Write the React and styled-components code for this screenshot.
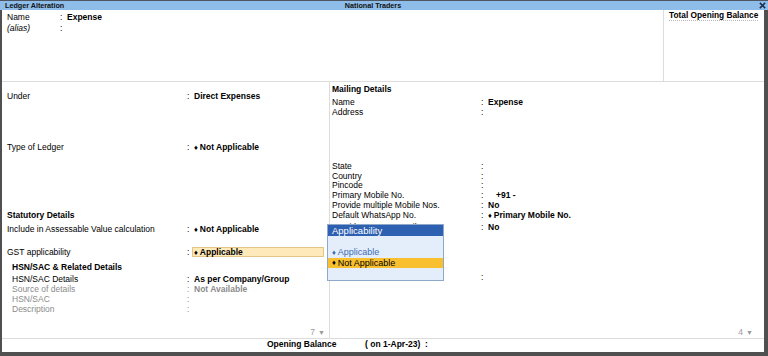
import React from 'react';
import styled, { createGlobalStyle } from 'styled-components';

const GlobalStyle = createGlobalStyle`
  html, body {
    margin: 0;
    padding: 0;
    background: #fff;
    overflow: hidden;
  }
  body {
    font-family: "Liberation Sans", Arial, sans-serif;
    font-size: 8.5px;
    color: #000;
  }
  * { box-sizing: border-box; }
`;

const Screen = styled.div`
  position: relative;
  width: 768px;
  height: 356px;
  display: flex;
  flex-direction: column;
`;

const TitleBar = styled.div`
  height: 10px;
  background: #8dbde8;
  border-top: 1px solid #4d5560;
  display: grid;
  grid-template-columns: 1fr auto 1fr;
  align-items: center;
  padding: 0 2px 0 5px;
  font-size: 7.2px;
  font-weight: bold;
  line-height: 9px;
  color: #111;
`;

const TitleCenter = styled.span`
  margin-right: 25px;
`;

const CloseIcon = styled.svg`
  justify-self: end;
  width: 7px;
  height: 7px;
`;

const Frame = styled.div`
  flex: 1;
  display: flex;
  flex-direction: column;
  border-left: 2px solid #505050;
  border-right: 4px solid #505050;
  border-bottom: 4px solid #505050;
`;

const TopSection = styled.div`
  height: 72px;
  display: flex;
  border-bottom: 1px solid #dcdcdc;
`;

const NameBlock = styled.div`
  flex: 1;
  padding: 2px 0 0 5px;
`;

const BalanceBox = styled.div`
  width: 101px;
  border-left: 1px solid #dcdcdc;
  padding-left: 5px;
`;

const BalanceTitle = styled.span`
  display: inline-block;
  font-weight: bold;
  font-size: 8.3px;
  line-height: 10px;
  border-bottom: 1px dotted #b8b8b8;
`;

const Main = styled.div`
  flex: 1;
  display: flex;
`;

const Panel = styled.div`
  display: flex;
  flex-direction: column;
  width: ${(p) => (p.$width ? `${p.$width}px` : 'auto')};
  flex: ${(p) => (p.$width ? 'none' : 1)};
  border-left: ${(p) => (p.$divider ? '1px solid #dcdcdc' : 'none')};
  padding: ${(p) => p.$pad};
`;

const Row = styled.div`
  display: grid;
  grid-template-columns: ${(p) => p.$label}px 7px 1fr;
  height: 10px;
  line-height: 10px;
  margin-top: ${(p) => p.$mt || 0}px;
  padding-left: ${(p) => p.$indent || 0}px;
  color: ${(p) => (p.$muted ? '#8c8c8c' : '#000')};
  white-space: nowrap;
`;

const Label = styled.span`
  font-style: ${(p) => (p.$italic ? 'italic' : 'normal')};
`;

const Colon = styled.span``;

const Value = styled.span`
  font-weight: bold;
  padding-left: ${(p) => p.$pad || 0}px;
`;

const FieldValue = styled.span`
  font-weight: bold;
  width: 132px;
  height: 10px;
  line-height: 8px;
  margin-left: -2px;
  padding-left: 1px;
  background: #fde9ba;
  border: 1px solid #e3c585;
`;

const Heading = styled.div`
  font-weight: bold;
  height: 10px;
  line-height: 10px;
  margin-top: ${(p) => p.$mt || 0}px;
  padding-left: ${(p) => p.$indent || 0}px;
`;

const Bullet = styled.span`
  font-size: 7.5px;
  font-weight: normal;
  vertical-align: 0.5px;
  margin-right: 2px;
`;

const PageMark = styled.div`
  margin-top: auto;
  align-self: flex-end;
  color: #9a9a9a;
  height: 10px;
  line-height: 10px;
  margin-bottom: 1px;
`;

const Arrow = styled.span`
  font-size: 7px;
  margin-left: 3px;
  vertical-align: 0.5px;
`;

const BottomBar = styled.div`
  height: 14px;
  border-top: 1px solid #dcdcdc;
  display: flex;
  padding-left: 265px;
  line-height: 10px;
  font-weight: bold;
`;

const BottomLabel = styled.span`
  width: 98px;
`;

const Popup = styled.div`
  position: absolute;
  left: 327px;
  top: 224px;
  width: 117px;
  height: 57px;
  background: #e3eefa;
  border: 1px solid #8ea8c9;
  display: flex;
  flex-direction: column;
`;

const PopupHeader = styled.div`
  height: 11px;
  background: #2d60b0;
  color: #fff;
  font-size: 9.5px;
  line-height: 11px;
  padding-left: 4px;
`;

const PopupItem = styled.div`
  height: 10.7px;
  line-height: 10.7px;
  font-size: 9px;
  padding-left: 4px;
  margin-top: ${(p) => p.$mt || 0}px;
  color: ${(p) => (p.$active ? '#000' : '#3d6db4')};
  background: ${(p) => (p.$active ? '#f8bf2f' : 'transparent')};
`;

const leftRows = (label, value, opts = {}) => (
  <Row $label={opts.indent ? 175 : 180} $indent={opts.indent} $mt={opts.mt} $muted={opts.muted}>
    <Label>{label}</Label>
    <Colon>:</Colon>
    {opts.field ? (
      <FieldValue>
        <Bullet>♦</Bullet>
        {value}
      </FieldValue>
    ) : (
      <Value>
        {opts.bullet && <Bullet>♦</Bullet>}
        {value}
      </Value>
    )}
  </Row>
);

const mailRow = (label, value, opts = {}) => (
  <Row $label={149} $mt={opts.mt}>
    <Label>{label}</Label>
    <Colon>:</Colon>
    <Value $pad={opts.pad}>
      {opts.bullet && <Bullet>♦</Bullet>}
      {value}
    </Value>
  </Row>
);

export default function App() {
  return (
    <>
      <GlobalStyle />
      <Screen>
        <TitleBar>
          <span>Ledger Alteration</span>
          <TitleCenter>National Traders</TitleCenter>
          <CloseIcon viewBox="0 0 8 8">
            <path d="M1 1 L7 7 M7 1 L1 7" stroke="#1c2d4d" strokeWidth="1.8" />
          </CloseIcon>
        </TitleBar>

        <Frame>
          <TopSection>
            <NameBlock>
              <Row $label={53}>
                <Label>Name</Label>
                <Colon>:</Colon>
                <Value>Expense</Value>
              </Row>
              <Row $label={53} $mt={1}>
                <Label $italic>(alias)</Label>
                <Colon>:</Colon>
                <Value />
              </Row>
            </NameBlock>
            <BalanceBox>
              <BalanceTitle>Total Opening Balance</BalanceTitle>
            </BalanceBox>
          </TopSection>

          <Main>
            <Panel $width={327} $pad="9px 4px 0 5px">
              {leftRows('Under', 'Direct Expenses')}
              {leftRows('Type of Ledger', 'Not Applicable', { bullet: true, mt: 41 })}
              <Heading $mt={58}>Statutory Details</Heading>
              {leftRows('Include in Assessable Value calculation', 'Not Applicable', { bullet: true, mt: 4 })}
              {leftRows('GST applicability', 'Applicable', { field: true, mt: 13 })}
              <Heading $mt={5} $indent={5}>HSN/SAC &amp; Related Details</Heading>
              {leftRows('HSN/SAC Details', 'As per Company/Group', { indent: 5, mt: 2 })}
              {leftRows('Source of details', 'Not Available', { indent: 5, muted: true })}
              {leftRows('HSN/SAC', '', { indent: 5, muted: true })}
              {leftRows('Description', '', { indent: 5, muted: true })}
              <PageMark>
                7<Arrow>▼</Arrow>
              </PageMark>
            </Panel>

            <Panel $divider $pad="2px 11px 0 2px">
              <Heading>Mailing Details</Heading>
              {mailRow('Name', 'Expense', { mt: 3 })}
              {mailRow('Address', '')}
              {mailRow('State', '', { mt: 43.7 })}
              {mailRow('Country', '')}
              {mailRow('Pincode', '', { mt: -0.4 })}
              {mailRow('Primary Mobile No.', '+91  -', { pad: 8, mt: -0.3 })}
              {mailRow('Provide multiple Mobile Nos.', 'No', { mt: 0.3 })}
              {mailRow('Default WhatsApp No.', 'Primary Mobile No.', { bullet: true, mt: -0.3 })}
              {mailRow('Provide Contact Details', 'No', { mt: 1.7 })}
              {mailRow('PAN/IT No.', '', { mt: 40 })}
              <PageMark>
                4<Arrow>▼</Arrow>
              </PageMark>
            </Panel>
          </Main>

          <BottomBar>
            <BottomLabel>Opening Balance</BottomLabel>
            <span>( on 1-Apr-23)&nbsp;&nbsp;:</span>
          </BottomBar>
        </Frame>

        <Popup>
          <PopupHeader>Applicability</PopupHeader>
          <PopupItem $mt={11}>
            <Bullet>♦</Bullet>Applicable
          </PopupItem>
          <PopupItem $active>
            <Bullet>♦</Bullet>Not Applicable
          </PopupItem>
        </Popup>
      </Screen>
    </>
  );
}
